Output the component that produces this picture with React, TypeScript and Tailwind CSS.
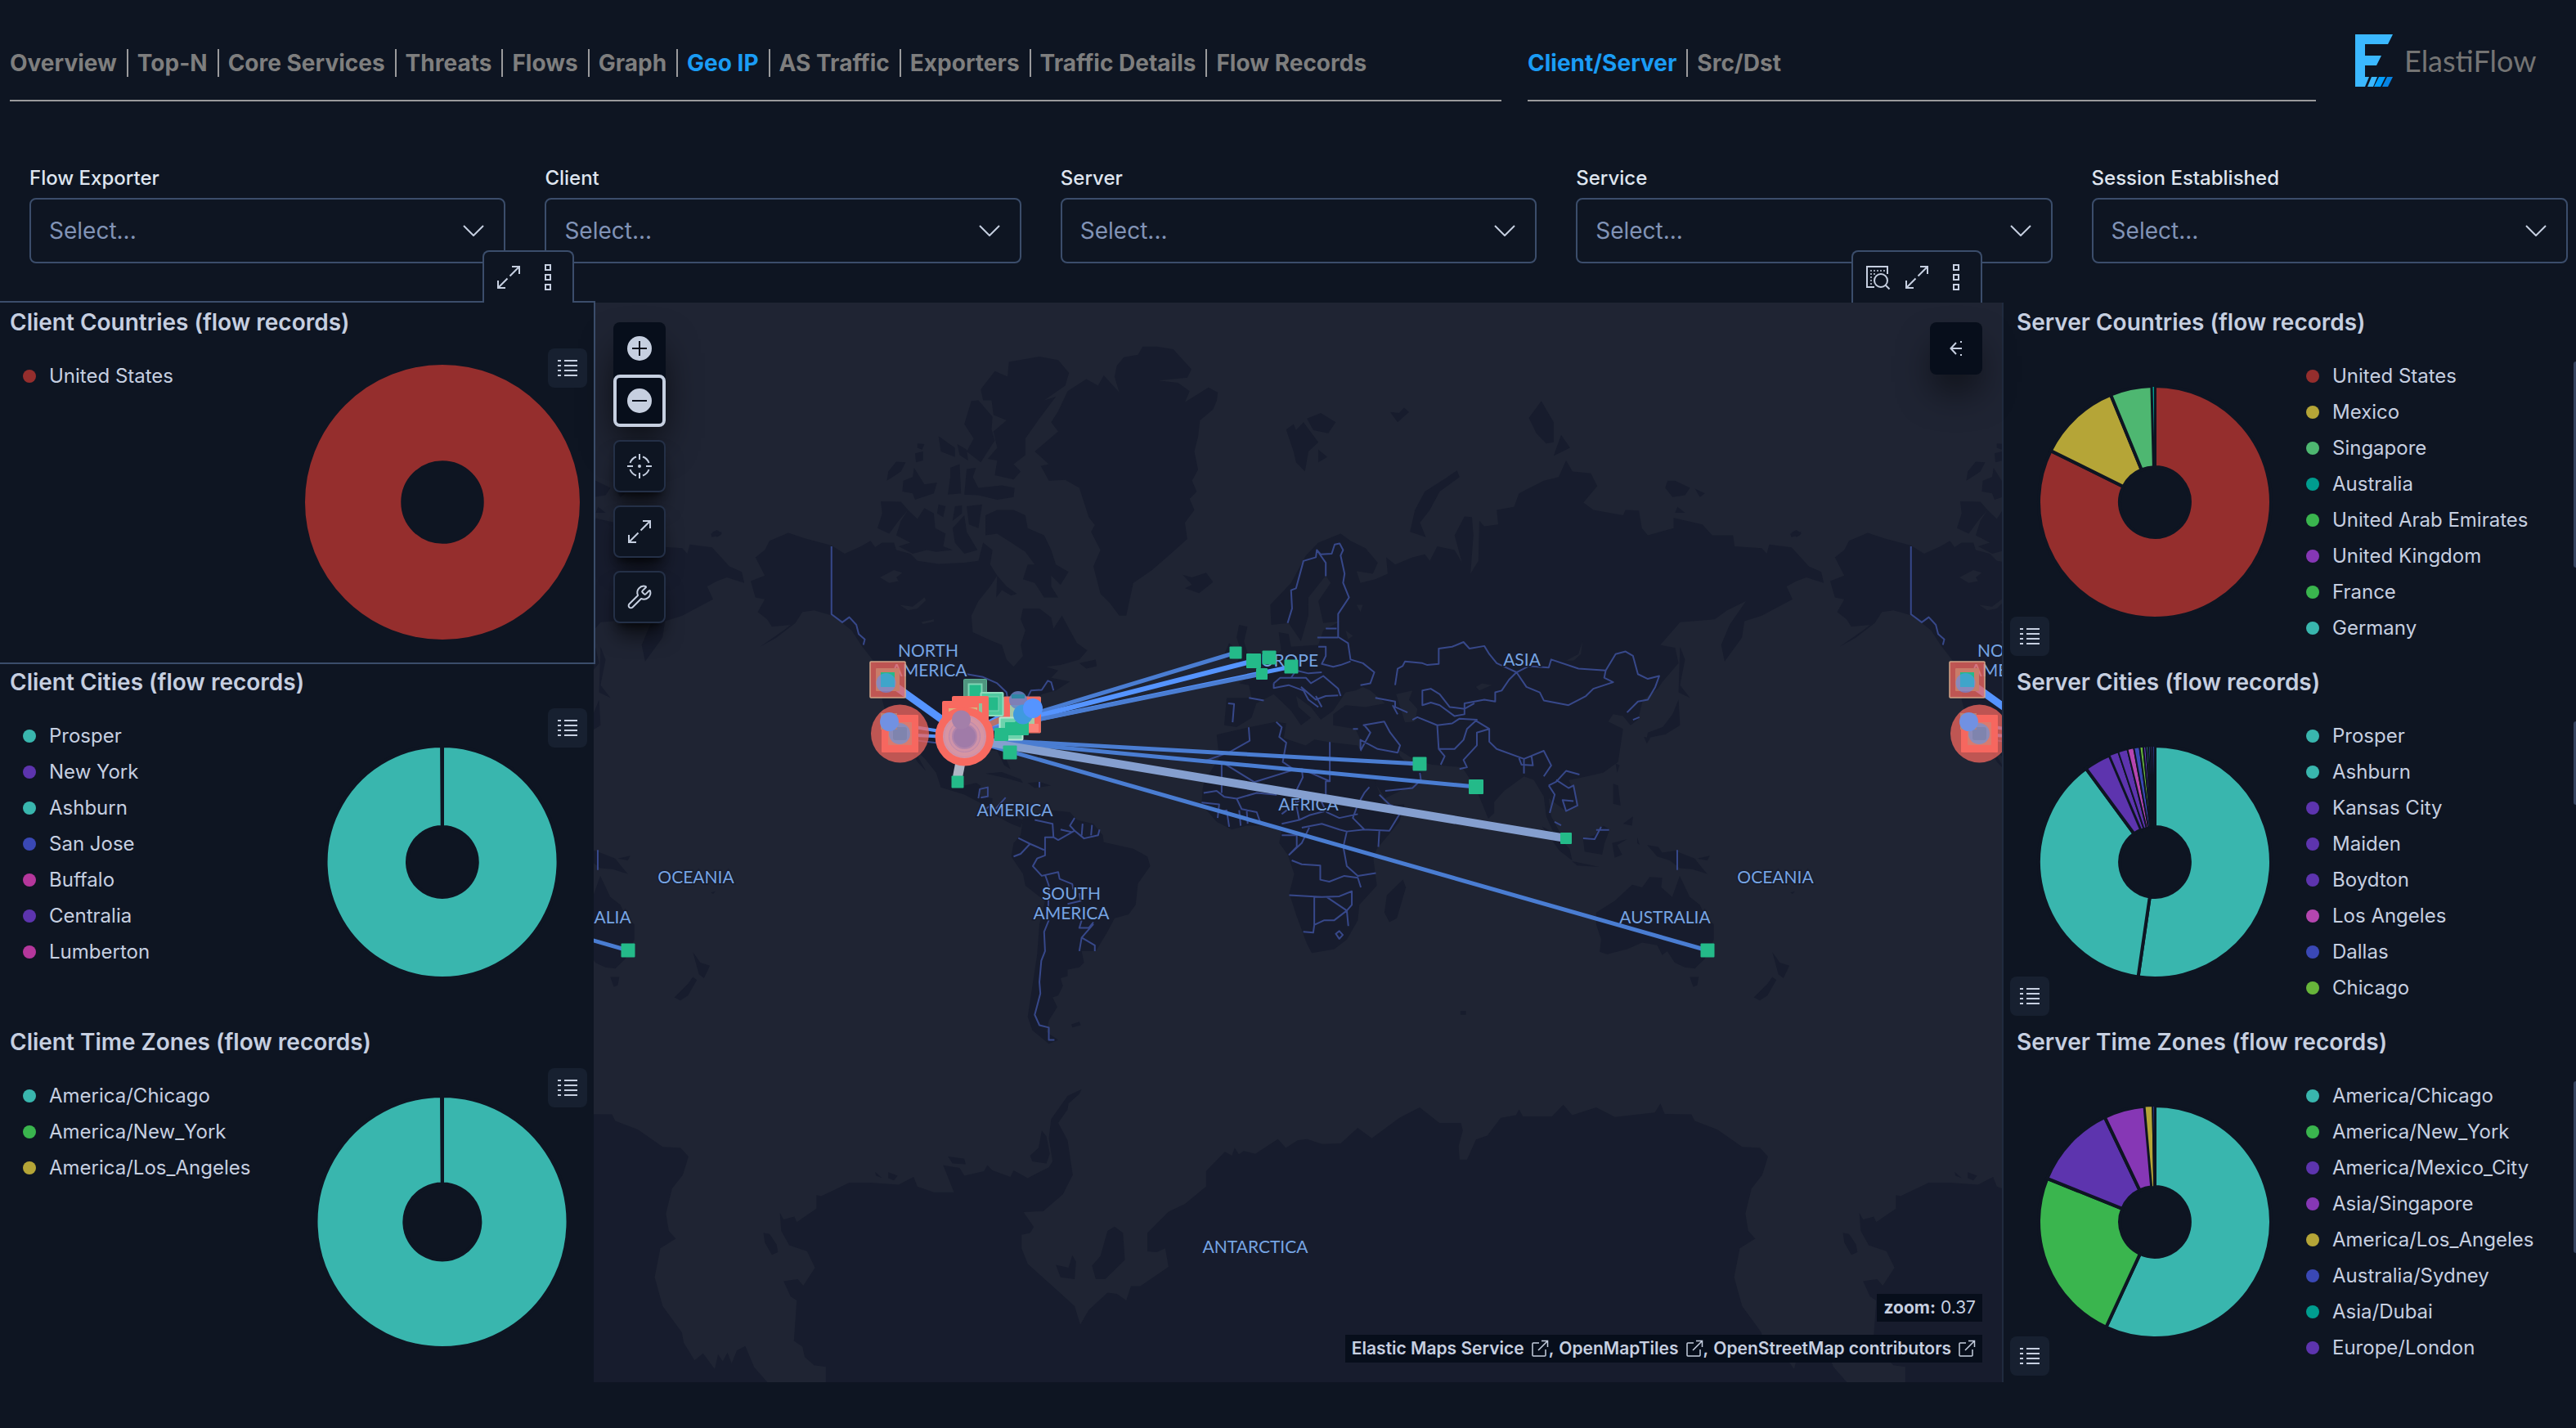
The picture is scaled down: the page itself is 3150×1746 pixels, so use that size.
import { Wrench } from "lucide-react";

type Slice = { label: string; color: string; value: number };

const RED = "#952e2d";
const TEAL = "#39b6ae";
const GREEN = "#3ab54e";
const PURPLE = "#5d34ae";
const VIOLET = "#8637b5";
const BLUE = "#3a48b5";
const MUSTARD = "#b5a537";
const PINK = "#b5379c";
const BACKGROUND = "#0e1522";

const mainTabs = [
  "Overview",
  "Top-N",
  "Core Services",
  "Threats",
  "Flows",
  "Graph",
  "Geo IP",
  "AS Traffic",
  "Exporters",
  "Traffic Details",
  "Flow Records",
];

const filters = ["Flow Exporter", "Client", "Server", "Service", "Session Established"];

const clientCountries: Slice[] = [{ label: "United States", color: RED, value: 100 }];

const clientCities: Slice[] = [
  { label: "Prosper", color: TEAL, value: 99.9 },
  { label: "New York", color: PURPLE, value: 0 },
  { label: "Ashburn", color: TEAL, value: 0 },
  { label: "San Jose", color: BLUE, value: 0 },
  { label: "Buffalo", color: PINK, value: 0 },
  { label: "Centralia", color: PURPLE, value: 0 },
  { label: "Lumberton", color: PINK, value: 0 },
];

const clientZones: Slice[] = [
  { label: "America/Chicago", color: TEAL, value: 99.9 },
  { label: "America/New_York", color: GREEN, value: 0 },
  { label: "America/Los_Angeles", color: MUSTARD, value: 0 },
];

const serverCountries: Slice[] = [
  { label: "United States", color: RED, value: 82.3 },
  { label: "Mexico", color: MUSTARD, value: 11.5 },
  { label: "Singapore", color: "#4eb771", value: 5.8 },
  { label: "Australia", color: "#009d8f", value: 0.4 },
  { label: "United Arab Emirates", color: GREEN, value: 0 },
  { label: "United Kingdom", color: VIOLET, value: 0 },
  { label: "France", color: GREEN, value: 0 },
  { label: "Germany", color: TEAL, value: 0 },
];

const serverCities: Slice[] = [
  { label: "Prosper", color: TEAL, value: 52.3 },
  { label: "Ashburn", color: TEAL, value: 37.6 },
  { label: "Kansas City", color: PURPLE, value: 3.7 },
  { label: "Maiden", color: PURPLE, value: 1.3 },
  { label: "Boydton", color: PURPLE, value: 1.3 },
  { label: "Los Angeles", color: "#b546b0", value: 0.9 },
  { label: "Dallas", color: BLUE, value: 0.8 },
  { label: "Chicago", color: "#67b53a", value: 0.5 },
];

const serverZones: Slice[] = [
  { label: "America/Chicago", color: TEAL, value: 56.9 },
  { label: "America/New_York", color: GREEN, value: 24.2 },
  { label: "America/Mexico_City", color: PURPLE, value: 11.8 },
  { label: "Asia/Singapore", color: VIOLET, value: 5.7 },
  { label: "America/Los_Angeles", color: MUSTARD, value: 1.1 },
  { label: "Australia/Sydney", color: BLUE, value: 0.3 },
  { label: "Asia/Dubai", color: "#009d8f", value: 0 },
  { label: "Europe/London", color: PURPLE, value: 0 },
];

// small slivers that have no legend row of their own
const cityTail = [
  { color: PURPLE, value: 0.4 },
  { color: TEAL, value: 0.3 },
  { color: BLUE, value: 0.3 },
  { color: PURPLE, value: 0.3 },
  { color: BLUE, value: 0.3 },
];

function ExpandIcon() {
  return (
    <svg viewBox="0 0 32 32" className="h-8 w-8" fill="none" stroke="currentColor" strokeWidth="2" aria-hidden="true">
      <path d="M20 3h9v9M29 3 17.500 14.500M3 20v9h9M3 29l11.500-11.500" />
    </svg>
  );
}

function BoxesIcon() {
  return (
    <svg viewBox="0 0 32 32" className="h-8 w-8" fill="none" stroke="currentColor" strokeWidth="2" aria-hidden="true">
      <path d="M13 1h6v6h-6zM13 13h6v6h-6zM13 25h6v6h-6z" />
    </svg>
  );
}

function InspectIcon() {
  return (
    <svg viewBox="0 0 32 32" className="h-8 w-8" fill="none" stroke="currentColor" strokeWidth="2" aria-hidden="true">
      <path d="M12 28H3V3h25v9" />
      <path d="M7 8h18M7 12h8M7 16h3M7 20h3M7 24h3" strokeDasharray="2 2" strokeWidth="1.500" />
      <circle cx="20" cy="20" r="8" />
      <path d="m25.500 25.500 5 5" />
    </svg>
  );
}

function ListIcon() {
  return (
    <svg viewBox="0 0 24 22" className="h-[22px] w-6" fill="none" stroke="currentColor" strokeWidth="2" aria-hidden="true">
      <path d="M0 2h4M8 2h16M0 8h4M8 8h16M0 14h4M8 14h16M0 20h4M8 20h16" />
    </svg>
  );
}

function PopoutIcon() {
  return (
    <svg viewBox="0 0 22 22" className="ml-2 h-[22px] w-[22px]" fill="none" stroke="currentColor" strokeWidth="1.500" aria-hidden="true">
      <path d="M10 4H3a1 1 0 0 0-1 1v14a1 1 0 0 0 1 1h14a1 1 0 0 0 1-1v-7M13 1.500h7.500V9M20.500 1.500 9 13" />
    </svg>
  );
}

function Logo() {
  return (
    <a href="#" className="flex items-center gap-[14px] pl-4" aria-label="ElastiFlow">
      <svg viewBox="0 0 46 64" className="h-16 w-[46px]" aria-hidden="true">
        <path d="M0 0h46l-6 12H12v14h20l-6 12H12v14h5l-5 12H0z" fill="#3bb8ff" />
        <path d="M20 52h7l-5 12h-7z" fill="#3bb8ff" />
        <path d="M29 52h8l-6 12h-8z" fill="#03a0ff" />
        <path d="M39 52h7l-6 12h-7z" fill="#0684e4" />
      </svg>
      <span className="font-[Lato] text-[36px] leading-none text-[#747474]">ElastiFlow</span>
    </a>
  );
}

function Tabs({ items, active, label }: { items: string[]; active: string; label: string }) {
  return (
    <nav aria-label={label} className="flex h-[76px] items-start border-b-2 border-[#9a9a9c]">
      <ul className="flex h-[58px] items-center">
        {items.map((item, i) => (
          <li key={item} className={i === 0 ? "pr-3" : "border-l-2 border-[#9a9a9c] pr-3 pl-[11px]"}>
            <a
              href="#"
              className={
                item === active
                  ? "text-[28px] leading-[34px] font-bold whitespace-nowrap text-[#1a9cf5]"
                  : "text-[28px] leading-[34px] font-bold whitespace-nowrap text-[#7e7e7e]"
              }
            >
              {item}
            </a>
          </li>
        ))}
      </ul>
    </nav>
  );
}

function Filter({ label }: { label: string }) {
  const id = label.toLowerCase().replace(" ", "-");
  return (
    <div className="flex flex-col gap-2">
      <label htmlFor={id} className="text-2xl leading-8 font-medium text-[#dfe5ef]">
        {label}
      </label>
      <div className="relative">
        <select
          id={id}
          className="h-20 w-full appearance-none rounded-lg border-2 border-[#3b4d6b] bg-transparent px-[22px] text-[28px] text-[#8193b6]"
        >
          <option>Select...</option>
        </select>
        <svg
          viewBox="0 0 26 14"
          className="pointer-events-none absolute top-[33px] right-[26px] h-[14px] w-[26px]"
          fill="none"
          stroke="#c6cfe0"
          strokeWidth="2"
          aria-hidden="true"
        >
          <path d="m1 1 12 12L25 1" />
        </svg>
      </div>
    </div>
  );
}

function point(r: number, share: number) {
  const a = (share / 100) * 2 * Math.PI;
  return `${(r * Math.sin(a)).toFixed(2)} ${(-r * Math.cos(a)).toFixed(2)}`;
}

function Donut({ slices, radius }: { slices: { color: string; value: number }[]; radius: number }) {
  const hole = radius * 0.302;
  let start = 0;
  const arcs = slices
    .filter((s) => s.value > 0)
    .map((s) => {
      const from = start;
      const to = start + s.value;
      start = to;
      const big = s.value > 50 ? 1 : 0;
      return {
        color: s.color,
        d: `M${point(radius, from)}A${radius} ${radius} 0 ${big} 1 ${point(radius, to)}L${point(hole, to)}A${hole} ${hole} 0 ${big} 0 ${point(hole, from)}Z`,
        thin: s.value < 2,
      };
    });
  return (
    <svg viewBox="-177 -177 354 354" className="h-[354px] w-[354px] shrink-0" role="img" aria-label="Donut chart">
      {slices.length === 1 ? (
        <circle r={(radius + hole) / 2} fill="none" stroke={slices[0].color} strokeWidth={radius - hole} />
      ) : (
        arcs.map((arc, i) => (
          <path key={i} d={arc.d} fill={arc.color} stroke={BACKGROUND} strokeWidth={arc.thin ? 2 : 4} />
        ))
      )}
    </svg>
  );
}

function Legend({ slices }: { slices: Slice[] }) {
  return (
    <ul className="pt-3">
      {slices.map((s) => (
        <li key={s.label} className="flex h-11 items-center gap-4 text-2xl whitespace-nowrap text-[#c6cfe0]">
          <span className="h-4 w-4 rounded-full" style={{ backgroundColor: s.color }} />
          {s.label}
        </li>
      ))}
    </ul>
  );
}

function LegendToggle({ className }: { className: string }) {
  return (
    <button
      aria-label="Toggle legend"
      className={`absolute flex h-12 w-12 items-center justify-center rounded-lg bg-[#172030] text-[#c6cfe0] ${className}`}
    >
      <ListIcon />
    </button>
  );
}

function ClientPanel({ title, slices, radius, selected }: { title: string; slices: Slice[]; radius: number; selected?: boolean }) {
  return (
    <section className={selected ? "relative z-10 h-[440px] outline-2 outline-[#3b4d6b]" : "h-[440px]"}>
      {selected && (
        <div className="absolute -top-16 right-6 flex h-16 items-center gap-4 rounded-t-lg border-x-2 border-t-2 border-[#3b4d6b] bg-[#0e1522] px-[14px] text-[#c6cfe0]">
          <button aria-label="Maximize panel">
            <ExpandIcon />
          </button>
          <button aria-label="Panel options">
            <BoxesIcon />
          </button>
        </div>
      )}
      <h2 className="flex h-12 items-center pl-3 text-[28px] font-semibold text-[#c6cfe0]">{title}</h2>
      <div className="relative mt-2 mr-2 flex h-[376px] justify-between pl-7">
        <Legend slices={slices} />
        <div className="flex items-center">
          <Donut slices={slices} radius={radius} />
        </div>
        <LegendToggle className="top-0 right-0" />
      </div>
    </section>
  );
}

function ServerPanel({ title, slices, tail = [], thumb }: { title: string; slices: Slice[]; tail?: { color: string; value: number }[]; thumb: string }) {
  return (
    <section className="h-[440px]">
      <h2 className="flex h-12 items-center pl-4 text-[28px] font-semibold text-[#c6cfe0]">{title}</h2>
      <div className="relative mt-2 ml-2 flex h-[376px] gap-2">
        <div className="flex items-center">
          <Donut slices={[...slices, ...tail]} radius={142} />
        </div>
        <Legend slices={slices} />
        <LegendToggle className="bottom-0 left-0" />
        <span className={`absolute top-4 right-0 w-[3px] rounded-l bg-[#36445f] ${thumb}`} />
      </div>
    </section>
  );
}

/* ---- map ---- */

// land outlines, kept in four sheets that each have their own grid
const sheets = [
  {
    transform: "translate(720 360) scale(.574 .4464)",
    land:
      "M950 430L1000 375 985 350 1000 320 1020 265 1060 232 1085 250 1097 222 1130 268 1120 225 1125 195 1140 172 1170 165 1180 143 1210 143 1245 150 1284 205 1275 228 1213 236 1255 242 1280 265 1270 295 1320 255 1340 268 1338 290 1330 315 1302 345 1298 390 1290 430 1298 480 1285 510 1295 540 1280 560 1290 590 1270 625 1275 670 1240 710 1200 755 1160 790 1145 880 1130 880 1110 845 1090 820 1075 745 1090 700 1070 650 1078 632 1065 610 1045 530 1015 508 980 510 963 470 980 465Z" +
      "M835 260L865 210 892 225 895 185 960 170 1000 180 1023 215 1015 250 970 290 995 280 960 340 930 395 930 440 905 465 920 485 905 507 865 495 870 455 850 450 870 420 862 375 890 345 862 330 858 290 840 290Z" +
      "M815 292L830 290 860 335 858 370 865 400 835 460 805 430 820 395 800 355Z" +
      "M745 388L780 420 780 445 750 430ZM785 410L805 425 808 455 790 440ZM700 408L715 410 710 425 700 420ZM695 435L712 430 712 455 697 460ZM655 458L675 460 665 485 635 510 638 485Z" +
      "M670 510L690 500 693 475 715 520 742 515 735 545 695 562 690 545 668 540ZM770 475L790 465 793 545 765 548 770 500ZM805 478L825 475 818 500 830 530 880 523 907 530 905 555 870 562 830 550 800 548Z" +
      "M622 567L665 568 680 590 660 620 640 655 615 640 625 600Z" +
      "M680 590L700 615 715 585 735 600 738 640 760 655 755 690 775 700 740 705 720 700 690 710 660 690 685 680 655 660 665 620Z" +
      "M745 575L760 580 755 610 742 600ZM780 580L795 578 795 600 775 620ZM805 580L838 575 830 640 810 630ZM775 640L800 605 805 650 828 700 800 710 780 680Z" +
      "M845 605L870 590 905 590 930 605 935 640 970 660 985 700 995 740 1022 760 1005 795 985 770 985 800 1000 830 970 830 950 790 925 780 935 740 950 740 930 705 900 680 870 655 845 660Z" +
      "M870 770L890 800 912 820 900 825 880 810 868 830ZM1265 768L1285 775 1315 762 1330 788 1300 818 1270 805 1285 795Z" +
      "M425 653L460 668 517 688 545 710 580 690 600 675 610 692 625 680 650 680 655 700 685 710 700 730 745 738 800 735 830 730 840 680 860 700 855 740 870 770 855 800 830 840 815 880 818 925 860 950 880 960 890 1000 905 1020 925 990 920 960 930 920 920 890 925 860 960 860 985 885 990 915 1008 880 1025 920 1040 955 1062 975 1045 1000 1005 1015 975 1020 1000 1030 985 1050 1025 1060 995 1085 965 1095 955 1110 930 1130 900 1170 890 1200 870 1225 890 1275 898 1300 885 1290 870 1250 830 1245 800 1260 785 1300 780 1330 800 1345 825 1338 835 1345 830 1365 835 1375 860 1380 858 1415 880 1435 905 1430 925 1440 920 1460 900 1450 870 1430 845 1400 800 1370 750 1350 740 1310 715 1270 690 1240 718 1305 700 1280 680 1235 640 1180 625 1110 628 1060 610 1010 580 960 560 920 520 880 480 865 455 870 440 900 400 940 365 965 415 920 430 905 390 910 380 890 360 870 375 835 355 830 345 785 375 770 355 720 375 700 385 675Z" +
      "M845 1312L880 1308 920 1328 925 1338 890 1325ZM935 1338L960 1335 985 1345 950 1352ZM1045 1010L1080 1000 1082 1018 1060 1025ZM260 655L283 650 280 660 262 665Z",
    water: "M620 775L650 755 668 762 655 775 660 785 640 790ZM662 850L690 855 715 830 718 838 700 860 680 865ZM708 897L735 890 735 896 712 903Z",
    borders:
      "M517 690V876L540 898 555 884 570 905 575 930 588 945 585 960M805 1040L840 1048 870 1065 890 1090 895 1130M930 1115L942 1085 965 1083 978 1058 985 1062 990 1085M700 1222L740 1228M830 1380L833 1355 850 1350 850 1375 835 1378M845 1410L855 1400 866 1410 888 1378M960 1335V1350",
  },
  {
    transform: "translate(1500 360) scale(.6059 .4464)",
    land:
      "M88 850L130 790 160 715 185 680 230 655 250 675 280 695 305 735 295 765 262 758 270 790 300 780 325 765 322 720 340 740 375 720 400 712 410 730 425 690 460 700 475 735 460 660 480 608 495 610 498 660 492 765 508 730 510 620 520 635 548 630 545 590 580 582 590 545 640 510 670 500 685 455 698 485 735 490 748 525 720 570 740 590 800 605 805 590 832 592 838 640 850 660 902 640 902 612 960 630 980 660 1022 660 1025 690 1080 695 1090 710 1095 685 1140 693 1175 745 1200 760 1205 790 1170 775 1150 785 1130 800 1142 835 1100 865 1080 880 1045 895 1040 940 1005 1005 998 960 1015 905 1048 840 1010 865 985 890 915 898 875 960 905 968 912 1010 880 1060 870 1080 840 1110 830 1165 815 1180 800 1155 780 1150 770 1170 800 1190 790 1280 760 1310 710 1325 690 1330 705 1370 705 1400 685 1415 670 1400 650 1380 655 1430 675 1480 665 1490 645 1430 640 1375 620 1330 600 1320 560 1360 540 1390 540 1420 528 1436 505 1360 490 1325 475 1295 415 1288 380 1275 345 1245 350 1265 375 1300 395 1310 380 1340 320 1380 275 1290 265 1250 275 1235 260 1190 215 1180 215 1150 240 1125 280 1130 320 1120 290 1085 275 1075 260 1085 240 1090 215 1140 190 1165 170 1130 140 1100 145 1130 170 1160 150 1180 130 1140 95 1095 60 1120 50 1160 20 1185-5 1180 0 1105 50 1105 45 1070 25 1065 65 1035 90 1010 110 975 105 925 125 930 130 965 185 960 195 920 230 895 195 900 185 840 210 790 200 770 165 830 165 880 150 950 125 900 90 905Z" +
      "M25 905L42 910 35 950 48 1010 18 1020 30 980 20 940ZM5 955L18 970 10 1000-8 995Z" +
      "M465 482L470 500 430 540 410 590 390 625 402 665 370 650 380 590 400 540 440 505ZM120 370L135 355 140 372 155 350 185 405 165 430 158 485 140 460 135 430ZM162 340L190 325 220 350 205 380 175 372ZM185 425L203 445 185 460ZM330 322L348 325 358 310 368 322 345 350Z" +
      "M635 292L660 350 660 405 645 408 625 380 610 338ZM675 385L693 420 660 442ZM890 510L905 510 935 530 925 550 900 555 885 530ZM945 532L965 545 955 555ZM910 582L925 598 905 598ZM1140 652L1150 645 1160 655 1150 665Z" +
      "M915 965L925 1000 915 1070 935 1105 912 1090ZM912 1110L915 1180 885 1205 848 1215 850 1200 880 1185 900 1150ZM842 1212L855 1215 848 1230ZM785 1285L793 1290 788 1310ZM780 1340L790 1345 795 1400 780 1395ZM800 1450L820 1430 818 1455Z",
    water: "M342 1095L375 1085 368 1110 385 1135 380 1170 360 1172 350 1130ZM503 1075L515 1065 535 1070 510 1085ZM685 1003L710 985 718 950 715 985 700 1003ZM240 920L255 935 245 945ZM262 850L275 850 270 870Z",
    borders:
      "M123 900L132 860 130 810 140 805 155 730 180 720 182 700 200 735 200 772M182 700L190 712 212 710 218 685 228 682 235 700 230 715 238 765 235 790 247 830 225 875 225 938 245 955 250 1000 275 1010 298 1035 290 1065 270 1070M185 965L200 965 200 990 192 1012 215 1020 230 1015 250 1005M183 940L210 940 225 940M200 915H222M95 1065L108 1050 130 1050 160 1050 170 1065 195 1045 225 1080 230 1100M130 1050L140 1030 165 1038 192 1035M150 1075L180 1110 200 1100 225 1098M95 1065V1078L125 1070 155 1085 165 1110 185 1130M180 1100L192 1130M45 1105L75 1112M3 1120L15 1122 12 1172" +
      "M340 1070L345 1025 355 1018 360 1005 395 1010 405 1015 428 1012 428 970 455 965 478 952 490 970 520 963 530 985 545 1010 585 1035 570 1055 555 1085 542 1090 542 1115 520 1110 480 1120 480 1150 460 1155 430 1125 412 1118 395 1125V1085L412 1080 430 1095 450 1130 480 1135 500 1120" +
      "M585 1035L610 1018 650 1022 655 1000 710 1025 765 1030 762 1050 780 1062 740 1080 725 1100 690 1125 640 1112 632 1090 605 1075ZM765 1030L785 985 805 978 820 990 830 1040 850 1053 873 1045 865 1075 850 1110 830 1115 808 1145M820 1165L833 1158" +
      "M375 1165L385 1158 425 1180 428 1245 460 1245 478 1220 485 1190 505 1165 470 1162 455 1175 425 1180M500 1165L530 1190 530 1225 545 1245 600 1272 640 1250 655 1290 640 1320M600 1272V1312M428 1245L440 1265 432 1288M530 1190L505 1200 505 1235 478 1275 485 1295 470 1300M300 1105L340 1115 340 1130 365 1145M335 1125L345 1150M255 1190H265M275 1180L318 1170 330 1200 350 1235 345 1255 305 1245 270 1220V1250L290 1200 278 1180M590 1270L595 1288 618 1290 615 1262" +
      "M650 1345L665 1335 685 1305 712 1315M665 1330L690 1352 700 1345 708 1400 685 1415 678 1385 700 1388M650 1345L662 1370 652 1420M320 1360L375 1352 392 1330 390 1310",
  },
  {
    transform: "translate(720 960) scale(.574 .4719)",
    land:
      "M925 85L950 75 985 65 1025 70 1040 90 1075 100 1095 130 1097 148 1160 165 1190 185 1196 210 1170 255 1165 310 1150 335 1120 345 1105 380 1080 430 1050 430 1055 460 1045 472 1020 478 1020 495 1005 500 1010 520 1000 545 988 550 998 575 980 610 975 640 1000 660 980 670 945 635 935 600 945 520 955 440 960 360 972 300 930 260 925 230 900 185 905 150 920 130Z" +
      "M1028 620L1045 613 1048 622 1030 628ZM260 278L270 275 265 282Z" +
      "M505 1547V1507L480 1503 460 1482 455 1455 437 1440 443 1335 430 1325 415 1285 445 1280 457 1297 482 1250 465 1208 427 1192 410 1155 407 1108 415 1125 438 1118 443 1132 485 1097V1062L495 1065 555 1030 600 1030 660 1035 692 1015 700 1040 735 1055 778 1055 755 985 790 992 800 1012 842 1000 849 985 860 998 898 1015 905 998 935 1018 980 990 988 975 980 915 985 865 1020 805 1050 788 1045 800 1022 825 1020 840 1000 875 1020 920 1031 1010 1010 1060 968 1104 926 1106 948 1145 940 1160 922 1165V1200L935 1240 985 1295 1035 1350 1047 1398 1065 1360 1105 1315 1125 1318 1145 1335 1155 1298 1175 1298 1235 1248 1228 1200 1210 1210 1190 1208V1160L1235 1105 1270 1085 1315 1040V1000L1355 950 1370 960 1376 940 1385 957 1395 948 1420 955 1468 917 1485 940 1510 920 1530 917 1562 930 1602 928 1638 888 1668 915 1727 862 1770 835 1812 875 1858 875 1862 895 1853 935 1855 970 1871 970 1890 918 1914 908 1943 862 1975 855 1982 840 1990 858 2052 858 2076 828 2095 855 2146 835 2186 860 2271 848 2283 825 2292 852 2349 853 2356 870 2404 892 2457 937 2495 940 2512 962 2500 1010 2477 1045 2464 1110 2470 1155 2485 1175 2452 1200 2440 1275 2457 1350 2498 1418 2502 1445 2525 1490 2543 1472 2568 1513 2575 1475 2585 1493 2595 1470 2604 1498 2615 1465 2633 1453 2652 1508 2680 1547Z" +
      "M372 1160L385 1163 400 1190 403 1210 390 1217 375 1185ZM1120 1144L1138 1160 1142 1230 1100 1280 1080 1280 1072 1245 1090 1220 1105 1155ZM1030 1218L1038 1235 1035 1280 1005 1275 995 1243 1022 1250ZM965 895L975 910 982 955 975 980 945 975 940 960 958 940ZM765 962L800 968 803 982 775 980ZM610 1002L625 1018 612 1012ZM638 1003L658 1012 650 1024 638 1018Z",
    water: "",
    borders:
      "M980 350L970 380 972 430 964 455 960 510 962 540 950 595 960 622 980 628V660H992M915 137L940 152 920 178 905 185M940 152L970 168M950 90L988 100 990 135 972 135 972 182 955 190 946 210 965 235 1000 225 1003 243 1030 256 1032 270M990 135L1000 142 1035 118 1025 105 1035 85M1035 118L1055 138 1085 130 1088 115M1052 100L1050 130M1072 103L1070 130M1005 115L1030 122M972 232L980 260 978 350M1020 308L1048 300 1045 280M1050 350L1045 370 1065 370 1075 355M1075 360L1050 395 1045 430M1050 395L1078 415V430",
  },
  {
    transform: "translate(1500 960) scale(.6122 .4719)",
    land:
      "M-20-131L44-150 99-164 119-160 114-122 158-103 175-118 203-112 262-103 282-51 307 25 317 53 355 50 345 95 300 165 293 190 300 260 265 310 262 350 240 400 215 425 170 435 160 410 140 340 125 280 135 230 122 180 105 150 110 115 75 105 40 105 10 115-20 95-50 50-48 10-45-10-15-70Z" +
      "M352 245L358 265 340 345 325 355 315 330 320 285ZM467 585H478V595H467Z" +
      "M738 330L775 300 810 258 830 265 845 238 870 240 868 265 890 290 905 235 925 290 945 310 958 345 973 360 973 400 955 450 935 475 915 472 895 460 880 430 870 440 860 415 830 408 800 425 760 438 745 432 748 400 738 360ZM925 497L943 497 940 518 932 523Z" +
      "M1090 433L1105 460 1124 468 1112 500 1102 490ZM1090 497L1098 505 1080 545 1065 558 1053 550 1080 515Z" +
      "M840 155L862 160 870 175 895 170 935 190 950 215 960 230 930 218 905 215 885 195 860 185ZM940 190L965 183 960 195ZM712 140L735 130 752 105 765 115 755 150 750 180 715 172ZM630 107L655 125 685 165 690 195 665 170ZM690 197L745 212 700 208ZM770 150L800 140 780 155 790 180 775 188ZM820 135L825 155 820 150Z",
    water: "",
    borders:
      "M44-150L46-115 5-85-45-62M99-164L110-150 105-125 119-110 112-60 135-40 55-8-10-60M206-112V-10L150-42 130-40M206-10H198V25L190 45 200 70 225 85 262 75M150-42L152-20 135 25 145 40 110 75M285 5L275 20 262 50 252 85 275 115 325 118 350 65 325 50 305 25M305 118L303 160M135 25L145 90 110 100M145 90L165 78 195 68M150 110L190 100 225 115 240 120 275 115M240 120L233 160 240 210 262 235 298 228M130 195L150 205 187 208V245L205 250 235 235 262 240 268 265M125 285L190 290 225 288 250 275 250 310 240 325 215 350 195 350 175 362 173 382 153 380M175 362V290M200 290L240 325 243 365M218 385L225 378 232 388 225 398ZM110 130H140L140 160 125 180 150 150 165 110" +
      "M-46 20L-20 15-5 30 20 35 60 20 100 25M-10-60V20M-15 70L0 65 5 108M25 65L28 105M40 65L42 100M20 35L30 62 60 70 68 100M-50 45L-15 50-18 85M900 168V220M712 138L735 140 748 108M738 116H764M655 95L668 104",
  },
];

const labels: [string, number, number][] = [
  ["NORTH", 1135, 803],
  ["AMERICA", 1136, 827],
  ["NORTH", 2455, 803],
  ["AMERICA", 2456, 827],
  ["AMERICA", 1241, 998],
  ["SOUTH", 1310, 1100],
  ["AMERICA", 1310, 1124],
  ["EUROPE", 1571, 815],
  ["ASIA", 1861, 814],
  ["AFRICA", 1600, 991],
  ["AUSTRALIA", 2036, 1129],
  ["AUSTRALIA", 716, 1129],
  ["OCEANIA", 2171, 1080],
  ["OCEANIA", 851, 1080],
  ["ANTARCTICA", 1535, 1532],
];

const flows: [string, string, number][] = [
  ["M1180 898 1511 798", "#4a7dd2", 5],
  ["M1180 898 1533 808", "#5594ff", 6],
  ["M1180 898 1580 815", "#5594ff", 5],
  ["M1180 898 1543 824", "#4a7dd2", 5],
  ["M1180 903 1736 934", "#4a7dd2", 5],
  ["M1180 903 1805 962", "#4a7dd2", 5],
  ["M1180 903 2088 1162", "#4a7dd2", 5],
  ["M1180 903 1915 1025", "#859fcf", 10],
  ["M1180 903 1171 950", "#b0b5c4", 12],
  ["M1180 900 1085 832", "#5594ff", 9],
  ["M1180 899 1100 886", "#5594ff", 4],
  ["M1180 902 1100 898", "#5594ff", 4],
  ["M1180 900 1250 862", "#5594ff", 7],
];

const servers: [number, number, number][] = [
  [1511, 798, 15],
  [1533, 808, 18],
  [1552, 804, 17],
  [1543, 824, 14],
  [1579, 815, 17],
  [1736, 934, 17],
  [1805, 962, 18],
  [1915, 1025, 14],
  [2088, 1162, 17],
  [1235, 920, 17],
  [1171, 956, 15],
];

function World({ dx }: { dx: number }) {
  return (
    <g transform={`translate(${dx} 0)`}>
      {sheets.map((s) => (
        <g key={s.transform} transform={s.transform}>
          <path d={s.land} fill="#171c2d" />
          <path d={s.water} fill="#1f2433" />
          <path d={s.borders} fill="none" stroke="#37488a" strokeWidth="2" vectorEffect="non-scaling-stroke" strokeLinejoin="round" />
        </g>
      ))}
    </g>
  );
}

function Traffic({ dx }: { dx: number }) {
  return (
    <g transform={`translate(${dx} 0)`}>
      {flows.map(([d, color, width]) => (
        <path key={d} d={d} stroke={color} strokeWidth={width} />
      ))}
      {servers.map(([x, y, size]) => (
        <rect key={`${x}-${y}`} x={x - size / 2} y={y - size / 2} width={size} height={size} rx="1" fill="#24ba89" />
      ))}

      {/* Seattle */}
      <rect x="1064" y="809" width="43" height="44" rx="1" fill="#f6675f" fillOpacity=".75" stroke="#d3a488" strokeWidth="1.500" />
      <rect x="1071" y="817" width="29" height="28" rx="1" fill="#c97c69" />
      <rect x="1077" y="822" width="17" height="18" fill="#24ba89" />
      <circle cx="1083.500" cy="835" r="12" fill="#5594ff" fillOpacity=".55" />

      {/* West coast */}
      <circle cx="1100.500" cy="897" r="35.500" fill="#f6675f" fillOpacity=".75" />
      <rect x="1078" y="874" width="45" height="46" rx="1" fill="#f6675f" />
      <rect x="1086" y="883" width="29" height="28" rx="1" fill="#da7b6e" />
      <circle cx="1100" cy="897" r="13" fill="#8d8cb8" />
      <rect x="1092" y="889" width="17" height="16" rx="3" fill="#7f84ae" />
      <rect x="1077" y="872" width="20" height="20" fill="#ba8271" />
      <circle cx="1087.500" cy="882.500" r="11.500" fill="#7191e2" />

      {/* East coast */}
      <path d="M1210 886 1240 872" stroke="#b5716c" strokeWidth="7" />
      <rect x="1227.500" y="852" width="45" height="44" rx="1" fill="#f6675f" stroke="#dc7566" />
      <rect x="1235" y="862" width="30" height="28" fill="#a6c9a5" />
      <path d="M1258 885h12v10h-20z" fill="#fb8278" />
      <circle cx="1245" cy="856" r="11" fill="#6885c6" fillOpacity=".85" />
      <rect x="1237" y="849" width="16" height="5" fill="#2f86a4" />
      <rect x="1222.500" y="877.500" width="28" height="27" rx="1" fill="#6dd3ad" stroke="#b7e7d2" strokeWidth="2" />
      <rect x="1216" y="890" width="17" height="16" rx="1" fill="#24ba89" />
      <rect x="1229" y="883" width="16" height="16" rx="1" fill="#24ba89" />
      <rect x="1241" y="882" width="17" height="17" rx="1" fill="#24ba89" />
      <circle cx="1251" cy="873.500" r="12" fill="#3f9adf" />
      <circle cx="1263" cy="866" r="12" fill="#5594ff" />

      {/* Midwest */}
      <rect x="1178.500" y="830.500" width="28" height="28" rx="1" fill="#4f957f" stroke="#5aab8f" />
      <rect x="1184.500" y="836.500" width="16" height="16" fill="#24ba89" stroke="#7fd4b4" strokeWidth="2" />
      <rect x="1199.500" y="847" width="27" height="28" rx="1" fill="#50c9a0" stroke="#8edcbd" strokeWidth="2" />
      <rect x="1205" y="852" width="16" height="17" fill="#24ba89" stroke="#7fd4b4" />

      {/* Texas */}
      <rect x="1152" y="857" width="45" height="45" rx="2" fill="#f86a60" />
      <rect x="1164" y="851" width="45" height="45" rx="2" fill="#f86a60" />
      <path d="M1160 866h10v6h-10zM1177 865h18v5h-18z" fill="#d9b37e" />
      <path d="M1197 860h4v16l-4-4z" fill="#93c19a" />
      <circle cx="1179.500" cy="900.500" r="36" fill="#f86a60" />
      <circle cx="1179.500" cy="900.500" r="26.500" fill="#d695a3" />
      <circle cx="1179.500" cy="900.500" r="25" fill="none" stroke="#c98fae" />
      <circle cx="1179.500" cy="900.500" r="19" fill="#cf93a8" stroke="#ba88ad" />
      <circle cx="1179.500" cy="900.500" r="14.500" fill="#a07ba8" stroke="#b084ab" strokeWidth="2" />
      <circle cx="1175.500" cy="880" r="11.500" fill="#a37fa9" />
    </g>
  );
}

function MapButton({ label, className, children }: { label: string; className: string; children: React.ReactNode }) {
  return (
    <button aria-label={label} className={`flex h-16 w-16 items-center justify-center text-[#c6cfe0] ${className}`}>
      {children}
    </button>
  );
}

function GeoMap() {
  return (
    <section className="relative bg-[#1f2433]" aria-label="Flow map">
      <svg
        viewBox="726 370 1722 1320"
        preserveAspectRatio="xMidYMid slice"
        className="absolute inset-0 h-full w-full"
        role="img"
        aria-label="World map of client and server traffic"
      >
        <World dx={-1320} />
        <World dx={0} />
        <World dx={1320} />
        <g fontFamily="Lato, 'Open Sans', sans-serif" fontSize="21" textAnchor="middle" fill="#76a4e3" stroke="#171c2d" strokeWidth="3" paintOrder="stroke">
          {labels.map(([text, x, y]) => (
            <text key={`${x}-${y}`} x={x} y={y}>
              {text}
            </text>
          ))}
        </g>
        <Traffic dx={-1320} />
        <Traffic dx={0} />
        <Traffic dx={1320} />
      </svg>

      <div className="absolute -top-16 right-6 flex h-16 items-center gap-4 rounded-t-lg border-x-2 border-t-2 border-[#3b4d6b] bg-[#0e1522] px-[14px] text-[#c6cfe0]">
        <button aria-label="Inspect">
          <InspectIcon />
        </button>
        <button aria-label="Maximize panel">
          <ExpandIcon />
        </button>
        <button aria-label="Panel options">
          <BoxesIcon />
        </button>
      </div>

      <div className="absolute top-6 left-6 flex flex-col gap-4">
        <div className="rounded-lg bg-[#070e1b] shadow-2xl shadow-black">
          <MapButton label="Zoom in" className="">
            <svg viewBox="0 0 32 32" className="h-8 w-8" aria-hidden="true">
              <circle cx="16" cy="16" r="15" fill="currentColor" />
              <path d="M7 16h18M16 7v18" stroke="#070e1b" strokeWidth="2" />
            </svg>
          </MapButton>
          <MapButton label="Zoom out" className="rounded-lg border-4 border-[#c6cfe0]">
            <svg viewBox="0 0 32 32" className="h-8 w-8" aria-hidden="true">
              <circle cx="16" cy="16" r="15" fill="currentColor" />
              <path d="M7 16h18" stroke="#070e1b" strokeWidth="2" />
            </svg>
          </MapButton>
        </div>
        <MapButton label="Fit to data" className="rounded-lg border-2 border-[#243047] bg-[#0e1522] shadow-xl shadow-black/60">
          <svg viewBox="0 0 32 32" className="h-8 w-8" fill="none" stroke="currentColor" strokeWidth="2" aria-hidden="true">
            <path d="M16 1v7M16 24v7M1 16h7M24 16h7M20 4.500A12.500 12.500 0 0 1 27.500 12M27.500 20a12.500 12.500 0 0 1-7.500 7.500M12 27.500A12.500 12.500 0 0 1 4.500 20M4.500 12A12.500 12.500 0 0 1 12 4.500" />
            <circle cx="16" cy="16" r="1" />
          </svg>
        </MapButton>
        <MapButton label="Full screen" className="rounded-lg border-2 border-[#243047] bg-[#0e1522] shadow-xl shadow-black/60">
          <ExpandIcon />
        </MapButton>
        <MapButton label="Tools" className="rounded-lg border-2 border-[#243047] bg-[#0e1522] shadow-xl shadow-black/60">
          <Wrench size={32} strokeWidth={1.5} />
        </MapButton>
      </div>

      <div className="absolute top-6 right-6">
        <MapButton label="Expand layers" className="rounded-lg bg-[#070e1b] shadow-2xl shadow-black">
          <svg viewBox="0 0 16 18" className="h-[18px] w-4" fill="none" stroke="currentColor" strokeWidth="2" aria-hidden="true">
            <path d="M1 9h14M8 2 1.500 9 8 16M13 1h2M13 17h2" />
          </svg>
        </MapButton>
      </div>

      <div className="absolute right-6 bottom-6 flex flex-col items-end gap-4 text-[21px] leading-[34px] text-[#c6cfe0]">
        <p className="bg-[#070e1b] px-2">
          <span className="font-bold">zoom:</span> 0.37
        </p>
        <p className="flex bg-[#070e1b] px-2 font-semibold">
          <a href="#" className="flex items-center">
            Elastic Maps Service <PopoutIcon />
          </a>
          <span className="pr-[6px]">,</span>
          <a href="#" className="flex items-center">
            OpenMapTiles <PopoutIcon />
          </a>
          <span className="pr-[6px]">,</span>
          <a href="#" className="flex items-center">
            OpenStreetMap contributors <PopoutIcon />
          </a>
        </p>
      </div>
    </section>
  );
}

export default function App() {
  return (
    <main className="min-h-screen bg-[#0e1522] pb-14 font-[Inter,sans-serif]">
      <header className="grid grid-cols-[1824fr_964fr_286fr] gap-8 pt-12 pl-3">
        <Tabs items={mainTabs} active="Geo IP" label="Dashboards" />
        <Tabs items={["Client/Server", "Src/Dst"]} active="Client/Server" label="Perspective" />
        <div className="-mt-[6px]">
          <Logo />
        </div>
      </header>

      <form className="mt-[78px] grid grid-cols-5 gap-12 pr-[10px] pl-9">
        {filters.map((f) => (
          <Filter key={f} label={f} />
        ))}
      </form>

      <div className="mt-12 grid grid-cols-[726fr_1722fr_702fr]">
        <div>
          <ClientPanel title="Client Countries (flow records)" slices={clientCountries} radius={168} selected />
          <ClientPanel title="Client Cities (flow records)" slices={clientCities} radius={142} />
          <ClientPanel title="Client Time Zones (flow records)" slices={clientZones} radius={154} />
        </div>
        <GeoMap />
        <div className="border-l-2 border-[#202b3e]">
          <ServerPanel title="Server Countries (flow records)" slices={serverCountries} thumb="h-[252px]" />
          <ServerPanel title="Server Cities (flow records)" slices={serverCities} tail={cityTail} thumb="h-[102px]" />
          <ServerPanel title="Server Time Zones (flow records)" slices={serverZones} thumb="h-[210px]" />
        </div>
      </div>
    </main>
  );
}
